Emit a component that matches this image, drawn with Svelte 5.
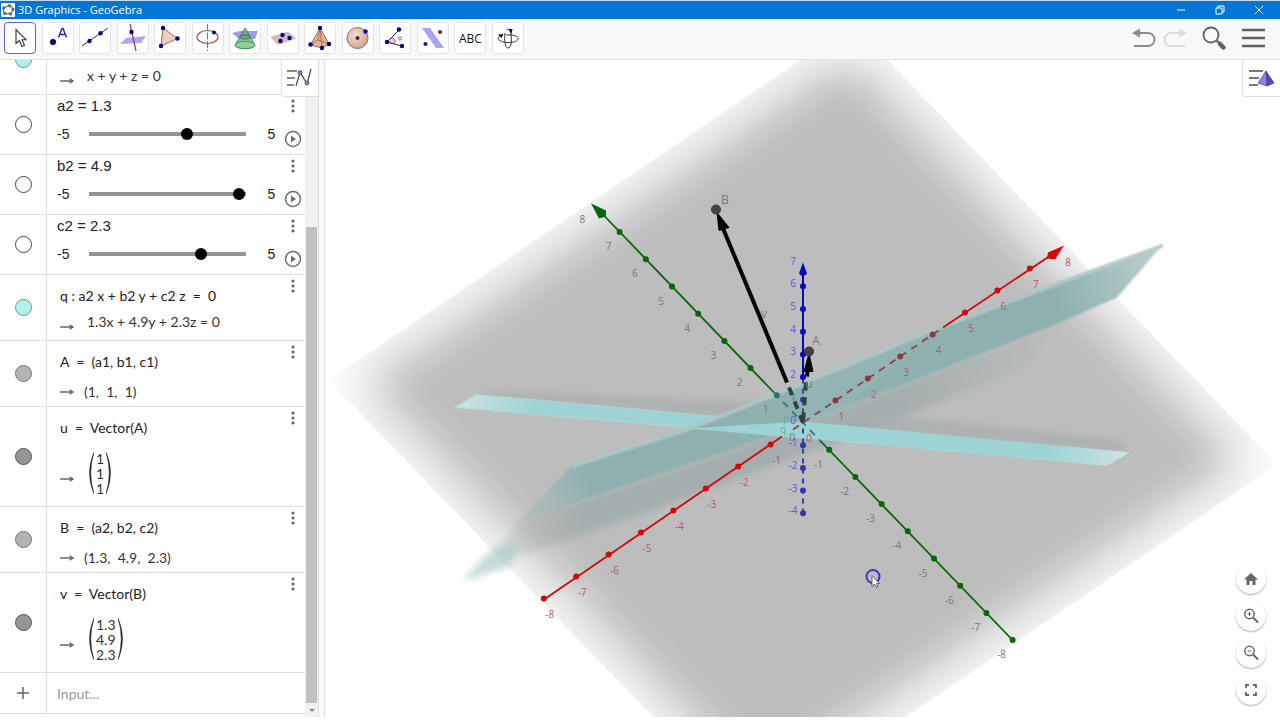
<script>
  let sliders = $state([
    { name: "a2", value: 1.3 },
    { name: "b2", value: 4.9 },
    { name: "c2", value: 2.3 },
  ]);

  let input = $state("");
  let tool = $state("Move");

  const tools = [
    "Move",
    "Point",
    "Line",
    "Perpendicular Line",
    "Polygon",
    "Circle with Axis",
    "Intersect Surfaces",
    "Plane through 3 Points",
    "Pyramid",
    "Sphere",
    "Angle",
    "Reflect about Plane",
    "Text",
    "Rotate View",
  ];

  // screen position of the origin and of one unit on each axis
  const origin = [803, 422];
  const axes = [
    { id: "x", unit: [32.4, -22], from: -8, to: 7, labels: 8, dx: 6, dy: 19 },
    { id: "y", unit: [-26.2, -27.2], from: -8, to: 7, labels: 8, dx: -11, dy: 18 },
    { id: "z", unit: [0, -22.7], from: -4, to: 6, labels: 7, dx: -10, dy: 1 },
  ];

  function range(a, b) {
    let arr = [];
    for (let i = a; i <= b; i++) arr.push(i);
    return arr;
  }

  function at(axis, k) {
    return [origin[0] + axis.unit[0] * k, origin[1] + axis.unit[1] * k];
  }

  function hidden(axis, k) {
    if (axis.id == "x") return k > 0 && k < 5;
    if (axis.id == "y") return k == 1;
    return k < 2;
  }
</script>

<svelte:head>
  <title>3D Graphics - GeoGebra</title>
</svelte:head>

{#snippet arrow()}
  <svg class="arrow" width="14" height="8" viewBox="0 0 14 8">
    <path d="M0 4H12M9.5 1.8 13 4 9.5 6.2" fill="none" stroke="#666" stroke-width="1.3" />
  </svg>
{/snippet}

{#snippet more()}
  <button class="more" aria-label="More">
    <svg width="6" height="16" viewBox="0 0 6 16" fill="#666">
      <circle cx="3" cy="3" r="1.6" /><circle cx="3" cy="8" r="1.6" /><circle cx="3" cy="13" r="1.6" />
    </svg>
  </button>
{/snippet}

{#snippet vector(values)}
  <div class="vector">
    <svg width="6" height="44" viewBox="0 0 6 44"><path d="M6 1Q-3 22 6 43Q-.5 22 6 1Z" fill="#222" stroke="#222" stroke-width=".5" /></svg>
    <div>
      {#each values as v}<span>{v}</span>{/each}
    </div>
    <svg width="6" height="44" viewBox="0 0 6 44"><path d="M0 1Q9 22 0 43Q6.5 22 0 1Z" fill="#222" stroke="#222" stroke-width=".5" /></svg>
  </div>
{/snippet}

{#snippet icon(name)}
  <svg width="30" height="30" viewBox="0 0 30 30" fill="none">
    {#if name == "Move"}
      <path d="M11 6.5V20.5L14.3 17.5 17 23.5 19.5 22.3 17 16.7H21Z" fill="#fff" stroke="#333" stroke-width="1.1" />
    {:else if name == "Point"}
      <circle cx="10" cy="19" r="2.8" fill="#00008b" stroke="#111" stroke-width=".7" />
      <path d="M15.5 14.5 19 5.5H20L23.5 14.5M16.7 11.5H22.3" stroke="#2424b8" stroke-width="1.4" />
    {:else if name == "Line"}
      <path d="M2 23 28 5" stroke="#333" />
      <circle cx="9.5" cy="18" r="2.2" fill="#00008b" /><circle cx="20.5" cy="10.3" r="2.2" fill="#00008b" />
    {:else if name == "Perpendicular Line"}
      <path d="M2 21 8 15 28 13 23 20Z" fill="#a9a9f4" />
      <path d="M12 1 18 28" stroke="#b33c4f" stroke-width="1.3" />
      <circle cx="13.5" cy="9" r="2.2" fill="#00008b" />
    {:else if name == "Polygon"}
      <path d="M8 5 22.5 15.5 6 23Z" fill="#ead0c0" stroke="#a66a4f" />
      <circle cx="8" cy="5" r="2.2" fill="#00008b" /><circle cx="22.5" cy="15.5" r="2.2" fill="#00008b" /><circle cx="6" cy="23" r="2.2" fill="#00008b" />
    {:else if name == "Circle with Axis"}
      <ellipse cx="14.5" cy="14" rx="10.5" ry="6.5" stroke="#c04a55" stroke-width="1.2" />
      <path d="M14.5 1V28" stroke="#777" stroke-dasharray="7 1.5" />
      <circle cx="21" cy="9.5" r="2" fill="#00008b" />
    {:else if name == "Intersect Surfaces"}
      <path d="M2 10 10 8 28 8 25 16 8 15Z" fill="#9a9aea" />
      <path d="M15 5 5 22C6 27 24 27 25 22Z" fill="#4eb06a" fill-opacity=".75" stroke="#2c8849" stroke-width=".8" />
      <ellipse cx="15" cy="22" rx="10" ry="3.5" fill="#8dd098" stroke="#2c8849" stroke-width=".7" />
      <ellipse cx="15" cy="14" rx="5" ry="2" stroke="#944763" />
    {:else if name == "Plane through 3 Points"}
      <path d="M2 14 20 8.5 28 15.5 10 22Z" fill="#d8b9ad" />
      <circle cx="14.5" cy="12" r="2.2" fill="#00008b" /><circle cx="21.5" cy="15" r="2.2" fill="#00008b" /><circle cx="12.5" cy="18" r="2.2" fill="#00008b" />
    {:else if name == "Pyramid"}
      <path d="M15 5 5.5 22 17 25 24 21Z" fill="#dfb397" stroke="#a36843" />
      <path d="M15 5 17 25M5.5 22 13 17 24 21M15 5 13 17" stroke="#9b6555" stroke-width=".8" />
      <circle cx="15" cy="5" r="2.2" fill="#00008b" /><circle cx="5.5" cy="21.5" r="2.2" fill="#00008b" /><circle cx="17" cy="25" r="2.2" fill="#00008b" /><circle cx="24" cy="21" r="2.2" fill="#00008b" />
    {:else if name == "Sphere"}
      <circle cx="14.5" cy="15" r="10.5" fill="url(#ball)" stroke="#9a6c58" />
      <circle cx="14.5" cy="15" r="2" fill="#4b1b63" /><circle cx="22.5" cy="8.5" r="2.2" fill="#00008b" />
    {:else if name == "Angle"}
      <path d="M7 19 12 14.5Q17 17 14 21Z" fill="#ffc9cb" stroke="#d3535a" />
      <path d="M19 7 7 19 22 23" stroke="#333" />
      <circle cx="20" cy="15.5" r="1.6" stroke="#d65157" />
      <circle cx="19" cy="6.5" r="2.2" fill="#00008b" /><circle cx="7" cy="19" r="2.2" fill="#00008b" /><circle cx="22" cy="23" r="2.2" fill="#00008b" />
    {:else if name == "Reflect about Plane"}
      <path d="M4 5H12L26 25H18Z" fill="#a8a4f3" />
      <circle cx="22" cy="9" r="2.1" fill="#9d2026" /><circle cx="7.5" cy="21" r="2.1" fill="#1c1c92" />
    {:else if name == "Rotate View"}
      <path d="M8 12.5C1 15.500 8 19.500 15 19.500S25 18 25 15.500 20 11.500 13 12" stroke="#333" />
      <path d="M12 10C11 16 12 25 15 25S19 19 18 12 15 5.500 13.500 7" stroke="#333" />
      <path d="M5 11.500 10.500 11 8.500 15ZM15.500 6 19.500 6 18.500 11Z" fill="#111" />
    {/if}
  </svg>
{/snippet}

<div class="window">
  <header class="titlebar">
    <svg width="14" height="14" viewBox="0 0 14 14">
      <rect width="14" height="14" fill="#fff" />
      <ellipse cx="7" cy="7" rx="4.8" ry="3.8" transform="rotate(-20 7 7)" fill="none" stroke="#555" />
      <g fill="#8585c4" stroke="#333" stroke-width=".6">
        <circle cx="8.5" cy="2.8" r="1.3" /><circle cx="2.8" cy="5" r="1.3" /><circle cx="3.8" cy="10.5" r="1.3" /><circle cx="9.5" cy="11" r="1.3" /><circle cx="12" cy="6.5" r="1.3" />
      </g>
    </svg>
    <h1>3D Graphics - GeoGebra</h1>
    <div class="controls">
      <button aria-label="Minimize"><svg width="10" height="10" viewBox="0 0 10 10"><path d="M1 5H9" /></svg></button>
      <button aria-label="Restore"><svg width="10" height="10" viewBox="0 0 10 10"><path d="M1 3H7V9H1ZM3 3V1H9V7H7" /></svg></button>
      <button aria-label="Close"><svg width="10" height="10" viewBox="0 0 10 10"><path d="M1 1 9 9M9 1 1 9" /></svg></button>
    </div>
  </header>

  <nav class="toolbar">
    <div class="tools">
      {#each tools as t}
        <button class:active={tool == t} aria-label={t} onclick={() => (tool = t)}>
          {#if t == "Text"}ABC{:else}{@render icon(t)}{/if}
        </button>
      {/each}
    </div>
    <div class="actions">
      <button aria-label="Undo">
        <svg width="26" height="26" viewBox="0 0 26 26" fill="none" stroke="#8c8c8c" stroke-width="2"><path d="M7 8H17A6.5 6.5 0 0 1 17 21H3" /><path d="M1 8 9 3.500V12.500Z" fill="#8c8c8c" stroke="none" /></svg>
      </button>
      <button aria-label="Redo">
        <svg width="26" height="26" viewBox="0 0 26 26" fill="none" stroke="#dcdcdc" stroke-width="2"><path d="M19 8H9A6.5 6.5 0 0 0 9 21H23" /><path d="M25 8 17 3.500V12.500Z" fill="#dcdcdc" stroke="none" /></svg>
      </button>
      <button class="wide" aria-label="Search">
        <svg width="26" height="26" viewBox="0 0 26 26" fill="none" stroke="#606060"><circle cx="10" cy="10" r="7.5" stroke-width="1.8" /><path d="M15.5 15.5 19 19" stroke-width="2" /><path d="M19 19 22.500 22.500" stroke-width="4.500" stroke-linecap="round" /></svg>
      </button>
      <button class="wide" aria-label="Menu">
        <svg width="26" height="26" viewBox="0 0 26 26" stroke="#606060" stroke-width="2.4"><path d="M2 5H25M2 13H25M2 21H25" /></svg>
      </button>
    </div>
  </nav>

  <main>
    <section class="algebra">
      <div class="rows">
        <div class="row math first">
          <div class="marker"><button class="teal" aria-label="Show p"></button></div>
          <div class="cell">
            <div class="result plane">{@render arrow()}<span>x + y + z = 0</span></div>
          </div>
        </div>
        {#each sliders as s}
          <div class="row slider">
            <div class="marker"><button aria-label="Show {s.name}"></button></div>
            <div class="cell">
              <label for={s.name}>{s.name} = {s.value}</label>
              <div class="track">
                <span>-5</span>
                <input id={s.name} type="range" min="-5" max="5" step="0.1" bind:value={s.value} />
                <span>5</span>
              </div>
            </div>
            <div class="side">
              {@render more()}
              <button class="play" aria-label="Play {s.name}">
                <svg width="18" height="18" viewBox="0 0 18 18"><circle cx="9" cy="9" r="7.5" fill="#fff" stroke="#6e6e6e" stroke-width="1.5" /><path d="M7 5.5 12 9 7 12.5Z" fill="#6e6e6e" /></svg>
              </button>
            </div>
          </div>
        {/each}
        <div class="row math">
          <div class="marker"><button class="teal" aria-label="Show q"></button></div>
          <div class="cell">
            <p>q : a2 x + b2 y + c2 z  =  0</p>
            <div class="result plane">{@render arrow()}<span>1.3x + 4.9y + 2.3z = 0</span></div>
          </div>
          <div class="side">{@render more()}</div>
        </div>
        <div class="row math">
          <div class="marker"><button class="light" aria-label="Show A"></button></div>
          <div class="cell">
            <p>A  =  (a1, b1, c1)</p>
            <div class="result point">{@render arrow()}<span>(1,  1,  1)</span></div>
          </div>
          <div class="side">{@render more()}</div>
        </div>
        <div class="row math tall">
          <div class="marker"><button class="dark" aria-label="Show u"></button></div>
          <div class="cell">
            <p>u  =  Vector(A)</p>
            <div class="result">{@render arrow()}{@render vector(["1", "1", "1"])}</div>
          </div>
          <div class="side">{@render more()}</div>
        </div>
        <div class="row math">
          <div class="marker"><button class="light" aria-label="Show B"></button></div>
          <div class="cell">
            <p>B  =  (a2, b2, c2)</p>
            <div class="result point">{@render arrow()}<span>(1.3,  4.9,  2.3)</span></div>
          </div>
          <div class="side">{@render more()}</div>
        </div>
        <div class="row math tall">
          <div class="marker"><button class="dark" aria-label="Show v"></button></div>
          <div class="cell">
            <p>v  =  Vector(B)</p>
            <div class="result">{@render arrow()}{@render vector(["1.3", "4.9", "2.3"])}</div>
          </div>
          <div class="side">{@render more()}</div>
        </div>
        <div class="row entry">
          <div class="marker">
            <svg width="12" height="12" viewBox="0 0 12 12"><path d="M6 0V12M0 6H12" stroke="#666" stroke-width="1.5" /></svg>
          </div>
          <input class="formula" type="text" aria-label="Input" placeholder="Input..." bind:value={input} />
        </div>
      </div>
      <div class="scrollbar">
        <div class="thumb"></div>
        <svg width="12" height="14" viewBox="0 0 12 14"><path d="M3 6H9L6 9Z" fill="#888" /></svg>
      </div>
      <button class="stylebar left" aria-label="Algebra style bar">
        <svg width="28" height="20" viewBox="0 0 28 20" fill="none"><path d="M1 3H11M1 10H9M1 17H8" stroke="#888" stroke-width="2" /><path d="M10 18 14 4 21 16 25 1" stroke="#444" stroke-width="1.2" /><g fill="#8888e0" stroke="#333" stroke-width=".7"><circle cx="14" cy="4.5" r="2" /><circle cx="21" cy="15" r="2" /></g></svg>
      </button>
    </section>

    <section class="view">
      <svg class="scene" viewBox="325 59 955 658" preserveAspectRatio="xMidYMid slice">
        <defs>
          <linearGradient id="fade" x1="0" x2="1" y1="0" y2="0">
            <stop offset="0" stop-color="#fff" stop-opacity=".22" />
            <stop offset=".03" stop-color="#fff" stop-opacity=".45" />
            <stop offset=".06" stop-color="#fff" stop-opacity=".75" />
            <stop offset=".09" stop-color="#fff" stop-opacity=".95" />
            <stop offset=".11" stop-color="#fff" />
            <stop offset=".89" stop-color="#fff" />
            <stop offset=".91" stop-color="#fff" stop-opacity=".95" />
            <stop offset=".94" stop-color="#fff" stop-opacity=".75" />
            <stop offset=".97" stop-color="#fff" stop-opacity=".45" />
            <stop offset="1" stop-color="#fff" stop-opacity=".22" />
          </linearGradient>
          <linearGradient id="grey" href="#fade" x1="0" x2="0" y1="0" y2="1" />
          <linearGradient id="strip" gradientUnits="userSpaceOnUse" x1="454" y1="400" x2="1129" y2="459">
            <stop offset="0" stop-color="#cfe3e3" />
            <stop offset=".12" stop-color="#9ed3d5" />
            <stop offset=".88" stop-color="#9ed3d5" />
            <stop offset="1" stop-color="#cfe3e3" />
          </linearGradient>
          <linearGradient id="q" gradientUnits="userSpaceOnUse" x1="500" y1="530" x2="1150" y2="250">
            <stop offset="0" stop-color="#b3bab9" stop-opacity=".3" />
            <stop offset=".14" stop-color="#8eb1b0" />
            <stop offset=".85" stop-color="#8eb1b0" />
            <stop offset="1" stop-color="#b6cdca" />
          </linearGradient>
          <linearGradient id="under" gradientUnits="userSpaceOnUse" x1="490" y1="560" x2="1060" y2="340">
            <stop offset="0" stop-color="#a4afae" stop-opacity="0" />
            <stop offset=".17" stop-color="#a5aeae" />
            <stop offset=".72" stop-color="#a5aeae" />
            <stop offset="1" stop-color="#a5aeae" stop-opacity="0" />
          </linearGradient>
          <radialGradient id="ball" cx=".4" cy=".35" r=".7">
            <stop offset="0" stop-color="#f7dccd" /><stop offset="1" stop-color="#cfa48f" />
          </radialGradient>
          <filter id="soft" x="-10%" y="-20%" width="120%" height="140%"><feGaussianBlur stdDeviation="3" /></filter>
          <filter id="edge" x="-5%" y="-10%" width="110%" height="120%"><feGaussianBlur stdDeviation="1" /></filter>
          <mask id="square" maskUnits="userSpaceOnUse" x="-9" y="-9" width="18" height="18">
            <rect x="-8.1" y="-8.1" width="16.2" height="16.2" fill="url(#grey)" />
          </mask>
          <mask id="both" maskUnits="userSpaceOnUse" x="-9" y="-9" width="18" height="18">
            <rect x="-8.1" y="-8.1" width="16.2" height="16.2" fill="url(#fade)" mask="url(#square)" />
          </mask>
        </defs>

        <!-- xOy plane -->
        <g transform="matrix(32.4 -22 -26.2 -27.2 803 422)">
          <rect x="-8.1" y="-8.1" width="16.2" height="16.2" fill="#bdbdbd" mask="url(#both)" />
        </g>

        <!-- plane p -->
        <path d="M500 390 803 404 1120 440 1129 452 803 424 477 395Z" fill="#aeb1b1" filter="url(#soft)" />
        <path d="M454 407 477 394 803 424 1129 452 1107 465 803 437Z" fill="url(#strip)" stroke="#b5d3d3" stroke-width=".8" />

        <!-- plane q -->
        <path d="M515 525 560 507 740 446 900 385 1060 322 1030 365 900 418 803 454 640 515 520 555 485 565Z" fill="url(#under)" filter="url(#soft)" />
        <path d="M462 581 492 548 520 540 510 566Z" fill="#a9cbc7" opacity=".65" filter="url(#soft)" />
        <path d="M492 548 572 465 690 427 803 382 930 330 1050 285 1163 244 1117 297 1060 322 900 385 740 446 560 507 515 524Z" fill="url(#q)" filter="url(#edge)" />
        <path d="M572 466 690 428 803 383 930 331 1050 286 1163 245" fill="none" stroke="#b4caca" stroke-width="3" filter="url(#edge)" />
        <path d="M803 384 930 334 900 362 830 417 803 422Z" fill="#9abdbd" opacity=".35" />
        <path d="M688 428 803 421 1129 452 1107 465 803 438Z" fill="url(#strip)" />

        {#each axes as axis}
          <g class="axis {axis.id}">
            {#if axis.id == "x"}
              <path d="M544 599 782 436M943 327 1052 254" />
              <path class="dash" d="M793 429 943 327" />
              <path class="head" d="M1064 245 1055 259 1047 258 1048 252Z" />
            {:else if axis.id == "y"}
              <path d="M602 213 774 392M820 440 1013 640" />
              <path class="dash" d="M774 392 820 440" />
              <path class="head" d="M591 203 606 210 606 216 599 218Z" />
            {:else}
              <path d="M803 272V378" />
              <path class="dash" d="M803 378V514" />
              <path class="head" d="M803 262 807 273Q803 278 799 273Z" />
            {/if}
            {#each range(axis.from, axis.to) as k}
              {#if k != 0}
                <circle class:dim={hidden(axis, k)} cx={at(axis, k)[0]} cy={at(axis, k)[1]} r="3" />
              {/if}
            {/each}
            {#each range(axis.from, axis.labels) as k}
              <text x={at(axis, k)[0] + axis.dx} y={at(axis, k)[1] + axis.dy}>{k}</text>
            {/each}
          </g>
        {/each}

        <g class="vec">
          <path d="M721 223 787 382" />
          <path class="dash" d="M789 387 803 422" />
          <path d="M808 366 807 376" />
          <path class="dash" d="M806 382 803 422" />
          <path class="tip" d="M717 212 729 227 719 230ZM809 353 813 371 804 371Z" />
          <circle cx="716" cy="209" r="4.5" /><circle cx="809" cy="351" r="4.5" />
          <text x="725" y="203">B</text>
          <text x="816" y="344">A</text>
          <text x="764" y="317">v</text>
          <text x="809" y="387">u</text>
          <text class="pq" x="786" y="421">p</text>
          <text class="pq" x="783" y="432">q</text>
        </g>

        <circle cx="873" cy="576" r="6.5" fill="none" stroke="#3535cf" stroke-width="2" />
        <path d="M872 575V586L874.5 583.5 876.5 587 878 586 876.5 583H879.5Z" fill="#fff" stroke="#444" stroke-width=".8" />
      </svg>

      <button class="stylebar right" aria-label="3D style bar">
        <svg width="28" height="20" viewBox="0 0 28 20"><path d="M1 3H15M1 10H11M1 17H10" stroke="#777" stroke-width="2" /><path d="M18 3 10 15 19 18 26 15Z" fill="#8d83e6" /><path d="M18 3 19 18 26 15Z" fill="#554bb2" /><path d="M18 3 10 15 19 18 26 15ZM18 3 19 18" fill="none" stroke="#443c8a" stroke-width=".7" /></svg>
      </button>

      <div class="zoom">
        <button aria-label="Home"><svg width="16" height="16" viewBox="0 0 16 16" fill="#666"><path d="M8 2 1 8.5H3.5V14H6.5V10H9.5V14H12.5V8.5H15Z" /></svg></button>
        <button aria-label="Zoom in"><svg width="16" height="16" viewBox="0 0 16 16" fill="none" stroke="#666" stroke-width="1.5"><circle cx="6.5" cy="6" r="4.7" /><path d="M10 9.5 15 14.5" stroke-width="2" /><path d="M4.5 6H8.5M6.5 4V8" stroke-width="1" /></svg></button>
        <button aria-label="Zoom out"><svg width="16" height="16" viewBox="0 0 16 16" fill="none" stroke="#666" stroke-width="1.5"><circle cx="6.5" cy="6" r="4.7" /><path d="M10 9.5 15 14.5" stroke-width="2" /><path d="M4.5 6H8.5" stroke-width="1" /></svg></button>
        <button aria-label="Fullscreen"><svg width="16" height="16" viewBox="0 0 16 16" fill="none" stroke="#666" stroke-width="1.8"><path d="M3 6V3H6M10 3H13V6M13 10V13H10M6 13H3V10" /></svg></button>
      </div>
    </section>
  </main>
</div>

<style>
  .window {
    height: 100vh;
    display: flex;
    flex-direction: column;
    box-sizing: border-box;
    padding-bottom: 3px;
    background: #fff;
    color: #222;
    font-family: "Liberation Sans", Arial, sans-serif;
    overflow: hidden;
  }
  button {
    padding: 0;
    border: 0;
    background: none;
    display: flex;
    align-items: center;
    justify-content: center;
  }
  svg {
    display: block;
  }
  .titlebar {
    height: 18px;
    flex: none;
    display: flex;
    align-items: center;
    border-top: 1px solid #c5ddf0;
    padding: 0 16px 0 1px;
    background: #0276d7;
    color: #fff;
  }
  h1 {
    margin: 0 0 0 3px;
    font: 11px/16px "Open Sans", sans-serif;
  }
  .controls {
    margin-left: auto;
    display: flex;
    gap: 29px;
  }
  .controls svg {
    fill: none;
    stroke: #fff;
  }
  .toolbar {
    height: 41px;
    flex: none;
    display: flex;
    justify-content: space-between;
    align-items: center;
    box-sizing: border-box;
    border-bottom: 1px solid #e2e2e2;
    padding: 0 14px 2px 4px;
    background: #f8f8f9;
  }
  .tools {
    width: 520px;
    display: flex;
    justify-content: space-between;
  }
  .tools button {
    width: 32px;
    height: 32px;
    box-sizing: border-box;
    border: 1px solid #e4e4e6;
    border-radius: 4px;
    background: #fff;
    color: #111;
    font: 12px "Open Sans", sans-serif;
  }
  .tools .active {
    border-color: #6060c8;
  }
  .actions {
    display: flex;
    gap: 5px;
  }
  .actions .wide {
    margin-left: 8px;
  }
  main {
    flex: 1;
    min-height: 0;
    display: flex;
  }
  .algebra {
    position: relative;
    flex: none;
    width: 325px;
    box-sizing: border-box;
    border-right: 1px solid #ddd;
    display: flex;
    background: #f9f9f9;
  }
  .rows {
    width: 305px;
    flex: none;
    display: flex;
    flex-direction: column;
    justify-content: flex-end;
    box-sizing: border-box;
    padding-bottom: 3px;
    background: #fff;
    overflow: hidden;
  }
  .row {
    flex: none;
    display: flex;
    box-sizing: border-box;
    height: 66px;
    border-bottom: 1px solid #ddd;
  }
  .row.first {
    height: 70px;
    align-items: stretch;
  }
  .row.slider {
    height: 60px;
  }
  .row.tall {
    height: 100px;
  }
  .row.entry {
    height: 41px;
  }
  .marker {
    width: 47px;
    flex: none;
    display: flex;
    align-items: center;
    justify-content: center;
    box-sizing: border-box;
    border-right: 1px solid #ddd;
  }
  .marker button {
    width: 17px;
    height: 17px;
    border: 1px solid #444;
    border-radius: 50%;
    background: #fff;
  }
  .marker .teal {
    background: #b2f0ea;
    border-color: #5f9d98;
  }
  .marker .light {
    background: #b3b3b3;
    border-color: #777;
  }
  .marker .dark {
    background: #969696;
    border-color: #555;
  }
  .cell {
    flex: 1;
  }
  .slider .cell {
    padding: 2px 0 0 10px;
  }
  .slider label {
    font-size: 15px;
    line-height: 18px;
    display: block;
  }
  .track {
    display: flex;
    align-items: center;
    font-size: 14px;
    line-height: 16px;
    margin-top: 11px;
  }
  .track input {
    appearance: none;
    width: 157px;
    height: 12px;
    margin: 0 21px 0 20px;
    background: linear-gradient(#949494, #949494) center / 100% 4px no-repeat;
  }
  .track input::-webkit-slider-thumb {
    appearance: none;
    width: 12px;
    height: 12px;
    border-radius: 50%;
    background: #000;
  }
  .side {
    width: 24px;
    flex: none;
    display: flex;
    flex-direction: column;
    align-items: center;
    gap: 16px;
    padding-top: 3px;
  }
  .math .cell {
    padding: 11px 0 0 13px;
    font: 14px/20px Lato, sans-serif;
  }
  .math.first .cell {
    padding-top: 35px;
  }
  .math p,
  .math span {
    margin: 0;
    white-space: pre;
  }
  .result {
    display: flex;
    align-items: center;
    gap: 14px;
    margin-top: 13px;
    color: #333;
  }
  .result.plane {
    margin-top: 6px;
    gap: 13px;
  }
  .result.point {
    margin-top: 10px;
    gap: 10px;
  }
  .plane .arrow,
  .tall .arrow {
    margin-top: 10px;
  }
  .vector {
    display: flex;
    gap: 2px;
  }
  .vector div {
    display: flex;
    flex-direction: column;
    justify-content: center;
  }
  .vector span {
    line-height: 15px;
  }
  .formula {
    flex: 1;
    min-width: 0;
    border: 0;
    outline: 0;
    padding: 0 10px;
    background: none;
    font: 14px Lato, sans-serif;
  }
  .formula::placeholder {
    color: #999;
  }
  .scrollbar {
    width: 14px;
    box-sizing: border-box;
    border-right: 1px solid #ddd;
    padding: 0 1px;
    background: #f1f1f1;
    display: flex;
    flex-direction: column;
    justify-content: flex-end;
  }
  .thumb {
    height: 72.5%;
    background: #c1c1c1;
  }
  .stylebar {
    position: absolute;
    top: 0;
    height: 37px;
    background: #fff;
    border: 1px solid #ddd;
    border-top: 0;
    box-sizing: border-box;
  }
  .left {
    width: 38px;
    right: 5px;
    border-radius: 0 0 0 4px;
  }
  .right {
    width: 38px;
    right: 0;
    border-right: 0;
    border-radius: 0 0 0 4px;
  }
  .view {
    position: relative;
    flex: 1;
    min-width: 0;
    background: #fff;
  }
  .scene {
    width: 100%;
    height: 100%;
  }
  .axis {
    fill: none;
    stroke-width: 1.8;
  }
  .axis text {
    stroke: none;
    font: 10px "Open Sans", sans-serif;
    text-anchor: middle;
  }
  .x {
    stroke: #d00909;
  }
  .x circle,
  .x .head {
    fill: #d00909;
    stroke: none;
  }
  .x .dash {
    stroke: #963c46;
    stroke-dasharray: 7 6;
  }
  .x circle.dim {
    fill: #8c3741;
  }
  .x text {
    fill: #bf5566;
  }
  .y {
    stroke: #0b650b;
  }
  .y circle,
  .y .head {
    fill: #0b650b;
    stroke: none;
  }
  .y .dash {
    stroke: #2f7d68;
    stroke-dasharray: 7 6;
  }
  .y circle.dim {
    fill: #2f7562;
  }
  .y text {
    fill: #6f806f;
  }
  .z {
    stroke: #0808bd;
    stroke-width: 2;
  }
  .z circle,
  .z .head {
    fill: #0808bd;
    stroke: none;
  }
  .z .dash {
    stroke: #3c3cad;
    stroke-dasharray: 5 5;
  }
  .z circle.dim {
    fill: #3535ad;
  }
  .z text {
    fill: #5a5ae0;
  }
  .vec {
    stroke: #050505;
    stroke-width: 4;
  }
  .vec .dash {
    stroke: #2b4444;
    stroke-dasharray: 8 7;
  }
  .vec .tip {
    fill: #050505;
    stroke-width: 1;
  }
  .vec circle {
    fill: #444;
    stroke: #333;
    stroke-width: 1;
  }
  .vec text {
    fill: #777;
    stroke: none;
    font: 12px "Open Sans", sans-serif;
    text-anchor: middle;
  }
  .vec .pq {
    fill: #62b0a4;
    font-size: 10px;
  }
  .zoom {
    position: absolute;
    right: 14px;
    bottom: 12px;
    display: flex;
    flex-direction: column;
    gap: 7px;
  }
  .zoom button {
    width: 30px;
    height: 30px;
    border-radius: 50%;
    background: #fff;
    box-shadow: 0 1px 2px #0005;
  }
</style>
